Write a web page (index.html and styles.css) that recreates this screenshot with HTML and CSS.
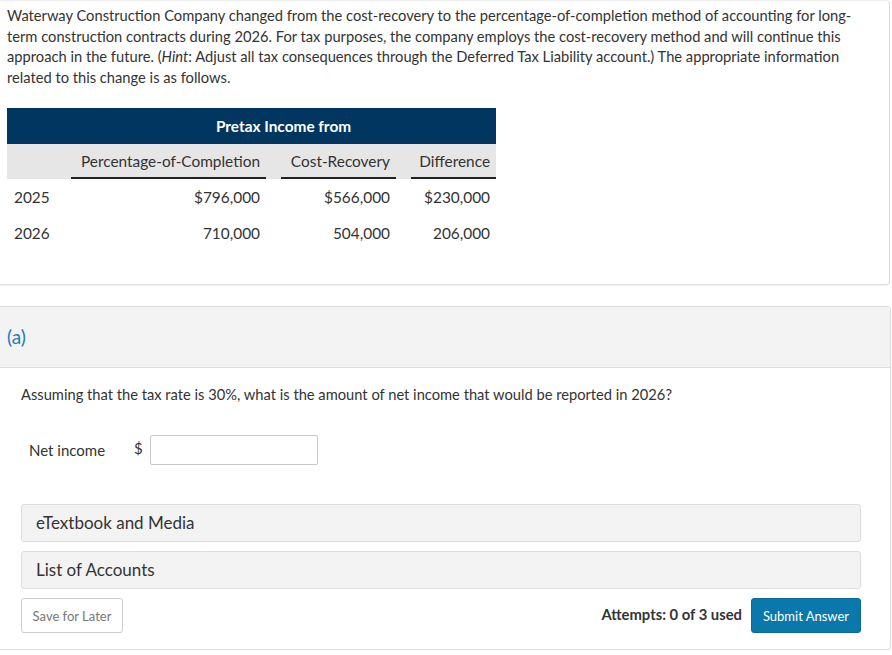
FILE: index.html
```html
<!DOCTYPE html>
<html lang="en">
<head>
    <meta charset="UTF-8">
    <meta name="viewport" content="width=device-width, initial-scale=1.0">
    <title>Question</title>
    <link rel="stylesheet" href="styles.css">
</head>
<body>
    <div class="card question-card">
        <p class="intro">Waterway Construction Company changed from the cost-recovery to the percentage-of-completion method of accounting for long-term construction contracts during 2026. For tax purposes, the company employs the cost-recovery method and will continue this approach in the future. (<i>Hint</i>: Adjust all tax consequences through the Deferred Tax Liability account.) The appropriate information related to this change is as follows.</p>

        <table class="income-table">
            <colgroup>
                <col class="c-year">
                <col class="c-poc">
                <col class="c-cost">
                <col class="c-diff">
            </colgroup>
            <thead>
                <tr class="top-head">
                    <th></th>
                    <th colspan="3">Pretax Income from</th>
                </tr>
                <tr class="sub-head">
                    <th></th>
                    <th><span>Percentage-of-Completion</span></th>
                    <th class="gap"><span>Cost-Recovery</span></th>
                    <th class="gap"><span>Difference</span></th>
                </tr>
            </thead>
            <tbody>
                <tr>
                    <td class="year">2025</td>
                    <td class="num">$796,000</td>
                    <td class="num">$566,000</td>
                    <td class="num">$230,000</td>
                </tr>
                <tr>
                    <td class="year">2026</td>
                    <td class="num">710,000</td>
                    <td class="num">504,000</td>
                    <td class="num">206,000</td>
                </tr>
            </tbody>
        </table>
    </div>

    <div class="card part-card">
        <div class="part-head">(a)</div>
        <div class="part-body">
            <p class="prompt">Assuming that the tax rate is 30%, what is the amount of net income that would be reported in 2026?</p>

            <div class="answer-row">
                <label for="net-income">Net income</label>
                <span class="dollar">$</span>
                <input type="text" id="net-income">
            </div>

            <div class="resource">eTextbook and Media</div>
            <div class="resource">List of Accounts</div>

            <div class="actions">
                <button type="button" class="btn-save">Save for Later</button>
                <div class="submit-group">
                    <span class="attempts">Attempts: 0 of 3 used</span>
                    <button type="button" class="btn-submit">Submit Answer</button>
                </div>
            </div>
        </div>
    </div>
</body>
</html>
```

FILE: styles.css
```css
body {
    margin: 0;
    font-family: Lato, "Open Sans", sans-serif;
    color: #333;
    background-color: #fff;
}

.card {
    width: 890px;
    border: 1px solid #ddd;
    border-left: none;
    border-radius: 0 4px 4px 0;
    box-shadow: 0 1px 1px rgba(0, 0, 0, 0.05);
}

.question-card {
    border-top-color: #eee;
    padding: 4px 28px 33px 7px;
    box-sizing: border-box;
}

.intro {
    margin: 0 0 21px;
    font-size: 14.7px;
    line-height: 20.5px;
}

.income-table {
    border-collapse: collapse;
    font-size: 15.4px;
    table-layout: fixed;
    width: 489px;
}

.c-year {
    width: 64px;
}

.c-poc {
    width: 195px;
}

.c-cost {
    width: 130px;
}

.c-diff {
    width: 100px;
}

.income-table th,
.income-table td {
    padding: 0;
}

.top-head th {
    background-color: #003660;
    color: #fff;
    font-weight: bold;
    height: 36px;
    text-align: center;
}

.sub-head th {
    background-color: #e6e6e6;
    font-weight: normal;
    height: 35px;
    vertical-align: bottom;
}

.sub-head th.gap {
    padding-left: 15px;
}

.sub-head span {
    display: block;
    border-bottom: 2px solid #222;
    padding: 0 6px 7px 0;
    text-align: right;
    white-space: nowrap;
}

.income-table td {
    height: 36px;
}

.income-table td.year {
    padding-left: 7px;
}

.income-table td.num {
    text-align: right;
    padding-right: 6px;
}

.part-card {
    margin-top: 21px;
}

.part-head {
    background-color: #f3f3f3;
    border-bottom: 1px solid #ddd;
    height: 60px;
    line-height: 60px;
    padding-left: 7px;
    font-size: 19px;
    color: #2379b5;
}

.part-body {
    padding: 16px 29px 16px 21px;
}

.prompt {
    margin: 0 0 31px;
    font-size: 14.7px;
    line-height: 20px;
}

.answer-row {
    display: flex;
    align-items: center;
    padding-left: 8px;
    margin-bottom: 39px;
    font-size: 15px;
}

.answer-row label {
    width: 105px;
}

.dollar {
    margin-top: -4px;
    width: 16px;
}

.answer-row input {
    width: 168px;
    height: 30px;
    box-sizing: border-box;
    border: 1px solid #c8c8c8;
    border-radius: 2px;
    font-family: inherit;
    font-size: 15px;
}

.resource {
    height: 38px;
    line-height: 36px;
    box-sizing: border-box;
    background-color: #f3f3f3;
    border: 1px solid #ddd;
    border-radius: 3px;
    padding-left: 14px;
    font-size: 17px;
    margin-bottom: 9px;
}

.actions {
    display: flex;
    justify-content: space-between;
    align-items: center;
    margin-top: 1px;
}

.btn-save {
    width: 102px;
    height: 35px;
    background-color: #fff;
    border: 1px solid #ccc;
    border-radius: 3px;
    color: #777;
    font-family: inherit;
    font-size: 13px;
}

.submit-group {
    display: flex;
    align-items: center;
    gap: 9px;
}

.attempts {
    font-weight: bold;
    font-size: 14.8px;
    margin-top: -3px;
}

.btn-submit {
    width: 110px;
    height: 35px;
    background-color: #0a78ab;
    border: 1px solid #086b98;
    border-radius: 3px;
    color: #fff;
    font-family: inherit;
    font-size: 13px;
}
```
